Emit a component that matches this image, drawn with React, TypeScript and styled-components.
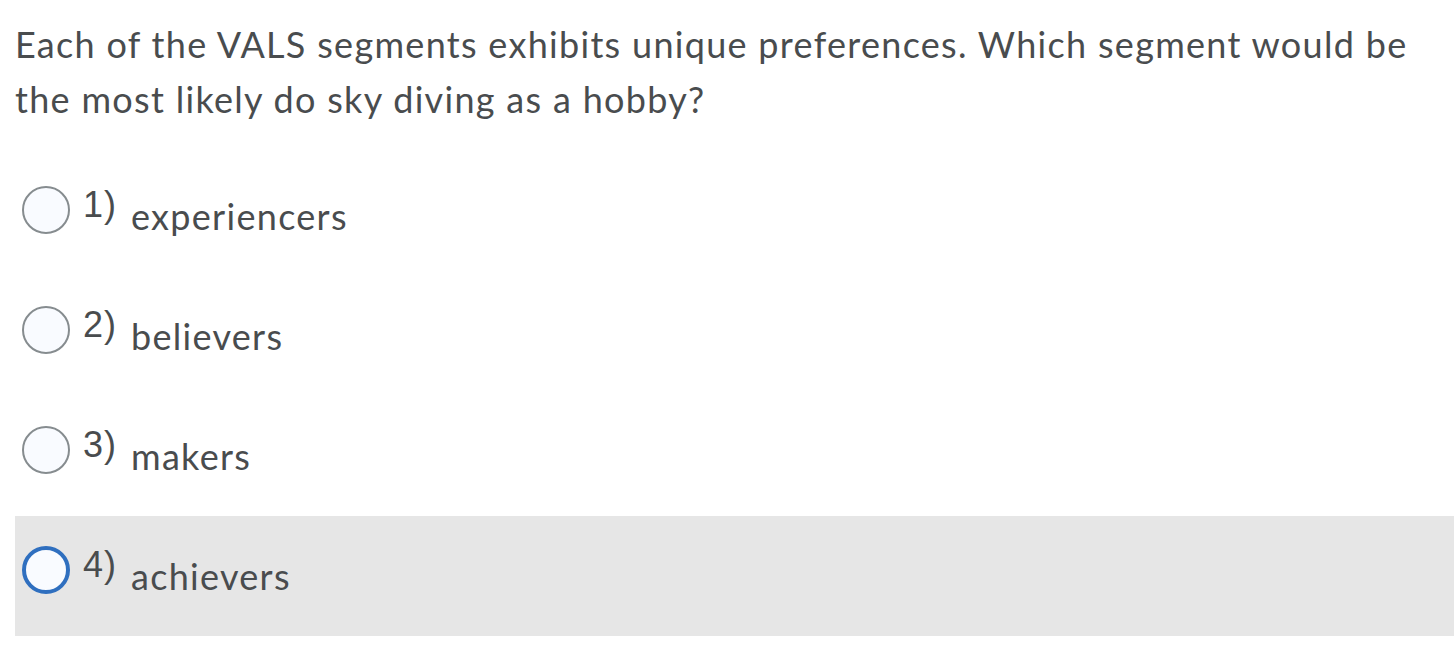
import React from "react";
import styled, { createGlobalStyle } from "styled-components";

const GlobalStyle = createGlobalStyle`
  body {
    margin: 0;
    background: #ffffff;
    font-family: Lato, "Open Sans", sans-serif;
    color: #494c4e;
  }
`;

const options = [
  { num: "1)", label: "experiencers" },
  { num: "2)", label: "believers" },
  { num: "3)", label: "makers" },
  { num: "4)", label: "achievers" },
];

const App = () => {
  const active = 3;
  return (
    <>
      <GlobalStyle />
      <Page>
        <Question>
          Each of the VALS segments exhibits unique preferences. Which segment would be the most likely do sky diving as a
          hobby?
        </Question>
        <OptionList>
          {options.map((item, index) => (
            <OptionRow key={index} $active={index === active}>
              <Radio $active={index === active} />
              <Num>{item.num}</Num>
              <Label>{item.label}</Label>
            </OptionRow>
          ))}
        </OptionList>
      </Page>
    </>
  );
};

const Page = styled.div`
  padding: 17px 0 0 15px;
`;

const Question = styled.div`
  font-family: Lato, sans-serif;
  font-size: 36px;
  letter-spacing: 1.3px;
  line-height: 55px;
  color: #494c4e;
  max-width: 1420px;
`;

const OptionList = styled.div`
  margin-top: 29px;
  display: flex;
  flex-direction: column;
`;

const OptionRow = styled.div<{ $active: boolean }>`
  height: 120px;
  display: flex;
  align-items: center;
  padding-left: 7px;
  background: ${(p) => (p.$active ? "#e6e6e6" : "transparent")};
  box-sizing: border-box;
`;

const Radio = styled.span<{ $active: boolean }>`
  width: 48px;
  height: 48px;
  box-sizing: border-box;
  border-radius: 50%;
  background: #f9fbff;
  border: ${(p) => (p.$active ? "4px solid #2f6fbf" : "2px solid #868c8f")};
  flex-shrink: 0;
  margin-top: -12px;
`;

const Num = styled.span`
  font-family: "Liberation Sans", Arial, sans-serif;
  font-size: 36px;
  letter-spacing: 1px;
  color: #494c4e;
  margin-left: 13px;
  margin-top: -22px;
`;

const Label = styled.span`
  font-family: Lato, sans-serif;
  font-size: 36px;
  letter-spacing: 1.3px;
  color: #494c4e;
  margin-left: 14px;
  margin-top: 0px;
`;

export default App;
